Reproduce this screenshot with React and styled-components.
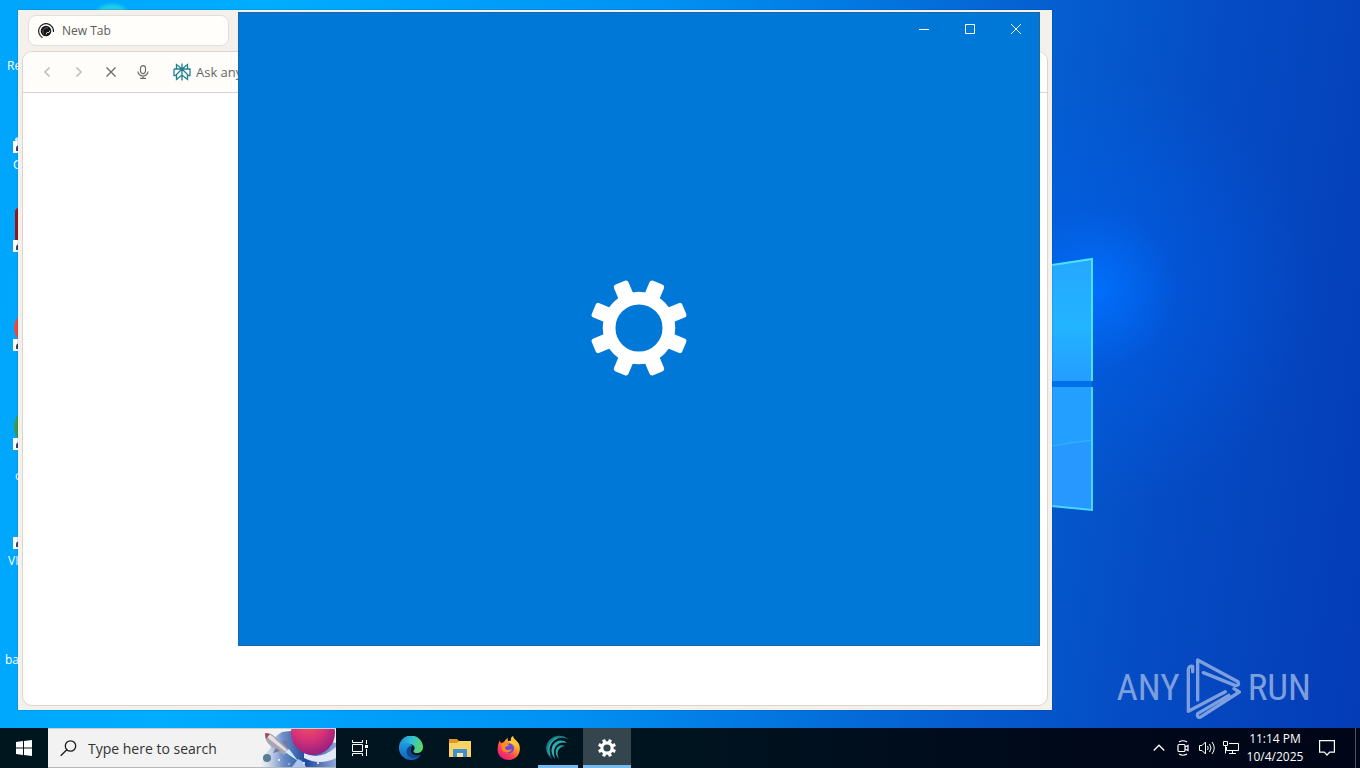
import React from "react";
import styled, { createGlobalStyle } from "styled-components";

const GlobalStyle = createGlobalStyle`
  * {
    box-sizing: border-box;
  }

  body {
    margin: 0;
    font-family: "Open Sans", "Noto Sans", sans-serif;
    font-size: 12px;
    overflow: hidden;
  }

  button, input {
    font: inherit;
    color: inherit;
    border: 0;
    padding: 0;
    background: none;
    outline: none;
  }

  svg {
    display: block;
    flex: none;
  }
`;

const Screen = styled.div`
  display: flex;
  flex-direction: column;
  height: 100vh;
`;

/* desktop */

const Desktop = styled.main`
  position: relative;
  flex: 1;
  overflow: hidden;
  background:
    radial-gradient(ellipse 20px 14px at 112px 16px, #22c9e6 70%, transparent),
    radial-gradient(circle at 1095px 290px, rgba(0, 112, 255, 0.95), rgba(0, 96, 240, 0.4) 80px, transparent 220px),
    linear-gradient(98deg, #00a5fc 0%, #00adff 18%, #0092f4 45%, #0562d2 70%, #054cc4 84%, #043cb6 100%);
`;

const Wallpaper = styled.svg`
  position: absolute;
  left: 979px;
  top: 240px;
`;

const Shortcuts = styled.ul`
  display: flex;
  flex-direction: column;
  width: 75px;
  margin: 0;
  padding: 0;
  list-style: none;
  color: #fff;
`;

const Shortcut = styled.li`
  height: 99px;
  flex: none;
`;

const ShortcutLabel = styled.div`
  padding-left: ${(p) => p.$indent}px;
  padding-top: ${(p) => (p.$second ? 14 : 0)}px;
  line-height: 18px;
`;

const Watermark = styled.div`
  position: absolute;
  right: 49px;
  bottom: 9px;
  display: flex;
  align-items: center;
  gap: 6px;
  color: #7e9fdd;
  font-family: "Liberation Sans Narrow", "Roboto Condensed", "Liberation Sans", sans-serif;
  font-size: 37px;
  line-height: 62px;
`;

/* browser window */

const BrowserWindow = styled.section`
  position: absolute;
  left: 18px;
  top: 10px;
  width: 1034px;
  height: 700px;
  display: flex;
  flex-direction: column;
  padding: 0 4px 4px;
  background: #f4f1ed;
  box-shadow: 0 0 1px rgba(0, 40, 80, 0.7);
`;

const TabStrip = styled.div`
  flex: none;
  height: 41px;
  padding: 5px 6px;
`;

const Tab = styled.button`
  display: flex;
  align-items: center;
  gap: 8px;
  width: 201px;
  height: 31px;
  padding: 0 9px;
  border: 1px solid #e2deda;
  border-radius: 8px;
  background: #fffefb;
  color: #5b5b59;
`;

const Page = styled.div`
  flex: 1;
  overflow: hidden;
  border: 1px solid #ddd5ca;
  border-radius: 10px;
  background: #fff;
`;

const Toolbar = styled.div`
  display: flex;
  align-items: center;
  height: 41px;
  padding-left: 8px;
  border-bottom: 1px solid #d9d6d2;
  background: #fffdfa;
`;

const ToolButton = styled.button`
  display: flex;
  align-items: center;
  justify-content: center;
  width: 32px;
  height: 32px;
  color: ${(p) => (p.disabled ? "#bdbbb8" : "#6b6b69")};
`;

const AddressBar = styled.label`
  display: flex;
  align-items: center;
  flex: 1;
  gap: 5px;
  margin-left: 14px;
`;

const AddressInput = styled.input`
  flex: 1;
  font-size: 13px;

  &::placeholder {
    color: #666664;
    opacity: 1;
  }
`;

/* settings window */

const SettingsWindow = styled.section`
  position: absolute;
  left: 238px;
  top: 12px;
  width: 802px;
  height: 634px;
  display: grid;
  border: 1px solid #1b66a6;
  background: #0078d7;
  color: #fff;
`;

const TitleBar = styled.header`
  grid-area: 1 / 1;
  align-self: start;
  display: flex;
  justify-content: flex-end;
`;

const CaptionButton = styled.button`
  display: flex;
  align-items: center;
  justify-content: center;
  width: 46px;
  height: 32px;
`;

const Splash = styled.div`
  grid-area: 1 / 1;
  place-self: center;
  padding-bottom: 2px;
`;

/* taskbar */

const Taskbar = styled.footer`
  display: flex;
  flex: none;
  height: 40px;
  background: linear-gradient(90deg, #00161f, #001420 50%, #000819 80%, #000617);
  color: #fff;
`;

const StartButton = styled.button`
  display: flex;
  align-items: center;
  justify-content: center;
  width: 48px;
`;

const SearchBox = styled.label`
  display: flex;
  align-items: center;
  width: 288px;
  padding-left: 12px;
  gap: 11px;
  background: #f2f2f2;
  border-top: 1px solid #c9cdcf;
  border-bottom: 1px solid #b4b8ba;
  color: #1a1a1a;
`;

const SearchInput = styled.input`
  flex: 1;
  min-width: 0;
  font-size: 14px;

  &::placeholder {
    color: #333;
    opacity: 1;
  }
`;

const Apps = styled.nav`
  display: flex;
  flex: 1;
  gap: 1px;
  padding-left: 2px;
`;

const AppButton = styled.button`
  display: flex;
  align-items: center;
  justify-content: center;
  width: 48px;
  background: ${(p) => (p.$active ? "#34454e" : "none")};
  border-bottom: 3px solid ${(p) => (p.$active ? "#76b9ed" : "transparent")};
  border-top: 3px solid ${(p) => (p.$active ? "#34454e" : "transparent")};

  ${(p) =>
    p.$running &&
    `background: linear-gradient(#76b9ed, #76b9ed) center bottom / 40px 3px no-repeat border-box;`}
`;

const Tray = styled.div`
  display: flex;
`;

const TrayButton = styled.button`
  display: flex;
  align-items: center;
  justify-content: center;
  width: ${(p) => (p.$wide ? 40 : 24)}px;
`;

const Clock = styled.button`
  width: 64px;
  line-height: 18px;
  text-align: center;
`;

const ShowDesktop = styled.button`
  width: 5px;
  margin-left: 8px;
  border-left: 1px solid #4b5261;
`;

const shortcuts = [
  { label: "Re", indent: 7 },
  { label: "G", indent: 13, badge: true, color: "#d9eefa", top: 38, height: 5 },
  { label: "", indent: 16, badge: true, color: "#9c1418", top: 10, height: 34 },
  { label: "", indent: 16, badge: true, color: "#ec4a41", circle: 31, r: 17 },
  { label: "c", indent: 15, second: true, badge: true, color: "#3b9b4a", circle: 31, r: 20 },
  { label: "VI", indent: 8, badge: true },
  { label: "ba", indent: 5 },
];

const ShortcutIcon = ({ item }) => (
  <svg width="56" height="57" viewBox="0 0 56 57">
    {item.height && <rect x="15" y={item.top} width="34" height={item.height} rx="4" fill={item.color} />}
    {item.circle && <circle cx={item.r + 14} cy={item.circle} r={item.r} fill={item.color} />}
    {item.badge && (
      <>
        <rect x="13" y="42" width="12" height="12" fill="#fff" />
        <path d="M17 52v-3q0-2 4-2" fill="none" stroke="#3b3f66" strokeWidth="2" />
      </>
    )}
  </svg>
);

const CometMark = () => (
  <svg width="16" height="16" viewBox="0 0 16 16" fill="none" stroke="#1d1d1d">
    <circle cx="8" cy="8" r="5.300" fill="#161616" stroke="none" />
    <path d="M4.500 14.600A7.400 7.400 0 1 1 15.400 9" strokeWidth="1.200" />
    <path d="M5.500 11C3.500 7.500 6.500 4 10 5" stroke="#888" strokeWidth=".7" />
    <path d="M8 11.500l1-2 2 0 1-2" stroke="#f5f5f5" strokeWidth=".8" />
  </svg>
);

const AnswerMark = () => (
  <svg width="18" height="18" viewBox="0 0 18 18" fill="none" stroke="#22808f" strokeWidth="1.300">
    <path d="M9 .5v17M3.500 6V1.500L9 6l5.500-4.500V6M1 6h16v6.500h-2.500M3.500 12.500H1V6M9 6l-5.500 5.500v5L9 12l5.500 4.500v-5z" />
  </svg>
);

const Gear = ({ size, hole = 24, tooth = 16 }) => (
  <svg width={size} height={size} viewBox="-50 -50 100 100" fill="#fff">
    {[0, 1, 2, 3, 4, 5, 6, 7].map((i) => (
      <rect key={i} x={-tooth / 2} y="-50" width={tooth} height="20" rx="3" transform={`rotate(${22.5 + i * 45})`} />
    ))}
    <circle r={(37 + hole) / 2} fill="none" stroke="#fff" strokeWidth={37 - hole} />
  </svg>
);

const SearchArt = () => (
  <svg width="76" height="38" viewBox="0 0 76 38">
    <defs>
      <radialGradient id="planet" cx=".4" cy=".25" r=".8">
        <stop offset="0" stopColor="#f4585c" />
        <stop offset=".5" stopColor="#d93277" />
        <stop offset="1" stopColor="#8c1d80" />
      </radialGradient>
      <linearGradient id="space" x1="0" x2="1">
        <stop offset="0" stopColor="#aebfe0" stopOpacity="0" />
        <stop offset=".3" stopColor="#6e8fc9" />
        <stop offset=".6" stopColor="#1f4a9c" />
        <stop offset="1" stopColor="#8fa8d8" />
      </linearGradient>
    </defs>
    <path d="M0 38Q3 25 10 20q2-12 12-17l25-3 20 12 9 2v24z" fill="url(#space)" />
    <path d="M44 24q16 8 32-6v11q-16 8-32 0z" fill="#e3e8f6" />
    <path d="M38 30q6 2 8 8H32z" fill="#a9c4f0" />
    <circle cx="53" cy="4" r="22" fill="url(#planet)" />
    <circle cx="7" cy="29" r="4" fill="#587c94" />
    <path d="M5 4q7-1 12 6l12 11-5 5-12-8Q4 12 5 4z" fill="#a6a5b5" />
    <path d="M6 5q6 0 10 6l11 10-2 1L13 13Q7 9 6 5z" fill="#e8dfe2" />
    <path d="M5 4l5 1-4 5z" fill="#a54a58" />
    <path d="M16 19l-3 5 7-2M22 12l5 0 3 7" fill="#77768e" />
    <path d="M25 23l4-3 9 12z" fill="#c9eeff" />
    <g fill="#fff">
      <circle cx="19" cy="31" r="1" />
      <circle cx="44" cy="34" r="1" />
      <circle cx="58" cy="34" r="1" />
      <circle cx="29" cy="35" r=".7" />
    </g>
  </svg>
);

const EdgeIcon = () => (
  <svg width="24" height="24" viewBox="0 0 24 24">
    <defs>
      <linearGradient id="edgeTop" x1="0" y1=".3" x2="1" y2=".5">
        <stop offset="0" stopColor="#2389dc" />
        <stop offset=".5" stopColor="#2fc2d5" />
        <stop offset="1" stopColor="#62d75d" />
      </linearGradient>
      <linearGradient id="edgeLow" x1="0" y1="0" x2="0" y2="1">
        <stop offset="0" stopColor="#1b9de2" />
        <stop offset="1" stopColor="#1461b8" />
      </linearGradient>
    </defs>
    <path d="M0 12a12 12 0 0 1 24-1c0 4-3 6-6 6-4 0-4-2-3-3 2-3-1-6-5-6-5 0-9 3-10 7z" fill="url(#edgeTop)" />
    <path d="M0 12c0-4 5-6 9-5 3 1 4 2 4 3-6 1-6 9 2 11 3 1 6-1 7-2-2 3-6 5-10 5A12 12 0 0 1 0 12z" fill="url(#edgeLow)" />
    <path d="M8 13c-2 6 3 10 8 9 3-.5 5-2 6-4-4 3-10 1-10-4 0-2 1-3 1-4-3 0-4 1-5 3z" fill="#11468d" />
  </svg>
);

const ExplorerIcon = () => (
  <svg width="22" height="18" viewBox="0 0 22 18">
    <path d="M0 0h8l2 2h12v4H0z" fill="#dc9a25" />
    <path d="M0 4h8l2-2h12v16H0z" fill="#fbd363" />
    <path d="M4 10h14v8h-4v-4H8v4H4z" fill="#3e91d0" />
    <path d="M8 14h6v4H8z" fill="#fbe4a0" />
  </svg>
);

const FirefoxIcon = () => (
  <svg width="24" height="24" viewBox="0 0 24 24">
    <defs>
      <linearGradient id="fox" x1=".9" y1="0" x2=".2" y2="1">
        <stop offset="0" stopColor="#fff044" />
        <stop offset=".4" stopColor="#ff9a29" />
        <stop offset=".7" stopColor="#ff4052" />
        <stop offset="1" stopColor="#e31587" />
      </linearGradient>
    </defs>
    <path d="M3 4c0 1 0 2 1 3l3-1c1-2 2-3 4-4-.5 1-.3 2 0 3h3c-.5-2 0-4 2-5 1 4 4 4 6 8 3 8-2 16-10 16S-1 18 1 10c0-2 1-4 2-6z" fill="url(#fox)" />
    <circle cx="12" cy="12.500" r="5" fill="#7047dc" />
    <path d="M4 8c3-2 6-1 8 1-1 2-4 1-4 3s4 3 7 1c-2 5-9 4-10 0z" fill="#ff8a24" />
    <path d="M12 5c4-1 7 2 8 7-1-2-2-3-4-4-1-1-3-1-4-3z" fill="#ffd43a" />
  </svg>
);

const CometIcon = () => (
  <svg width="26" height="26" viewBox="0 0 26 26">
    <path d="M24 5C19-1 8-1 3 7c-4 7-1 13 4 17C3 17 4 10 9 6c5-4 10-4 15-1z" fill="#1b7f8a" />
    <path d="M22 8C18 4 11 5 8 10c-3 5-1 10 2 14-1-5-2-9 1-13 3-4 7-4 11-3z" fill="#2bb1ae" />
    <path d="M20 11c-4-2-8 0-9 4-1 3 0 6 3 9-2-4-2-7 0-10 2-2 4-3 6-3z" fill="#27a5a5" />
    <path d="M5 20C2 13 5 6 12 3" fill="none" stroke="#49c9c4" strokeWidth=".8" />
  </svg>
);

const PlayMark = () => (
  <svg width="56" height="62" viewBox="270 51 168 186" fill="none" stroke="#7e9fdd" strokeWidth="10" strokeLinejoin="round" strokeLinecap="round">
    <path d="M305 180V60L426 125Q431 137 419 137L322 98" />
    <path d="M290 95V79Q277 77 277 90V214L388 155" />
    <path d="M414 146L430 156L312 232Q302 233 305 221L398 166" />
  </svg>
);

const App = () => {
  return (
    <Screen>
      <GlobalStyle />
      <Desktop>
        <Wallpaper width="130" height="290" viewBox="0 0 130 290">
          <defs>
            <linearGradient id="pane" x1="0" y1="0" x2="0" y2="1">
              <stop offset="0" stopColor="#25a8ff" />
              <stop offset=".55" stopColor="#22b4ff" />
              <stop offset="1" stopColor="#249cff" />
            </linearGradient>
          </defs>
          <path d="M0 36L113 19V141H0z" fill="url(#pane)" />
          <path d="M0 36L113 19V141" fill="none" stroke="#4ce2fc" strokeWidth="2" />
          <path d="M0 141h113v6H0z" fill="#0070e8" />
          <path d="M0 147h113v123L0 259z" fill="#2698ff" />
          <path d="M0 147h113v54L0 215z" fill="#239fff" />
          <path d="M72 206l41-6" stroke="#30b9f6" strokeWidth="1" />
          <path d="M113 147v123L0 259" fill="none" stroke="#4ad8f8" strokeWidth="2" />
        </Wallpaper>
        <Shortcuts>
          {shortcuts.map((item, i) => (
            <Shortcut key={i}>
              <ShortcutIcon item={item} />
              <ShortcutLabel $indent={item.indent} $second={item.second}>
                {item.label}
              </ShortcutLabel>
            </Shortcut>
          ))}
        </Shortcuts>
        <Watermark>
          <span>ANY</span>
          <PlayMark />
          <span>RUN</span>
        </Watermark>

        <BrowserWindow>
          <TabStrip>
            <Tab>
              <CometMark />
              New Tab
            </Tab>
          </TabStrip>
          <Page>
            <Toolbar>
              <ToolButton disabled aria-label="Back">
                <svg width="8" height="10" viewBox="0 0 8 10" fill="none" stroke="currentColor" strokeWidth="1.500">
                  <path d="M6.500.500L2 5l4.500 4.500" />
                </svg>
              </ToolButton>
              <ToolButton disabled aria-label="Forward">
                <svg width="8" height="10" viewBox="0 0 8 10" fill="none" stroke="currentColor" strokeWidth="1.500">
                  <path d="M1.500.500L6 5 1.500 9.500" />
                </svg>
              </ToolButton>
              <ToolButton aria-label="Stop">
                <svg width="10" height="10" viewBox="0 0 10 10" stroke="currentColor" strokeWidth="1.300">
                  <path d="M.5.500l9 9M9.500.500l-9 9" />
                </svg>
              </ToolButton>
              <ToolButton aria-label="Voice">
                <svg width="12" height="14" viewBox="0 0 12 14" fill="none" stroke="currentColor" strokeWidth="1.200">
                  <rect x="3.500" y=".6" width="5" height="8" rx="2.500" />
                  <path d="M1 6.500a5 4.500 0 0 0 10 0M6 11v2.500M3 13.400h6" />
                </svg>
              </ToolButton>
              <AddressBar>
                <AnswerMark />
                <AddressInput placeholder="Ask any" aria-label="Address" />
              </AddressBar>
            </Toolbar>
          </Page>
        </BrowserWindow>

        <SettingsWindow>
          <TitleBar>
            <CaptionButton aria-label="Minimize">
              <svg width="10" height="10" viewBox="0 0 10 10" stroke="#fff">
                <path d="M0 5.500h10" />
              </svg>
            </CaptionButton>
            <CaptionButton aria-label="Maximize">
              <svg width="10" height="10" viewBox="0 0 10 10" fill="none" stroke="#fff">
                <path d="M.5.500h9v9h-9z" />
              </svg>
            </CaptionButton>
            <CaptionButton aria-label="Close">
              <svg width="10" height="10" viewBox="0 0 10 10" stroke="#fff">
                <path d="M0 0l10 10M10 0L0 10" />
              </svg>
            </CaptionButton>
          </TitleBar>
          <Splash>
            <Gear size={98} />
          </Splash>
        </SettingsWindow>
      </Desktop>

      <Taskbar>
        <StartButton aria-label="Start">
          <svg width="16" height="16" viewBox="0 0 16 16" fill="#fff">
            <path d="M0 2l7-1v6.500H0zM8 1l8-1v7.500H8zM0 8.500h7V15l-7-1zM8 8.500h8V16l-8-1z" />
          </svg>
        </StartButton>
        <SearchBox>
          <svg width="17" height="17" viewBox="0 0 17 17" fill="none" stroke="currentColor" strokeWidth="1.300">
            <circle cx="10.500" cy="6" r="5.200" />
            <path d="M6.800 9.700L.7 15.800" />
          </svg>
          <SearchInput placeholder="Type here to search" aria-label="Search" />
          <SearchArt />
        </SearchBox>
        <Apps>
          <AppButton aria-label="Task view">
            <svg width="20" height="16" viewBox="0 0 20 16" fill="none" stroke="#fff">
              <path d="M.5 0v2.500h10V0M.5 4.500h10v7H.5zM.5 16v-2.500h10V16M14.500 0v4M14.500 9v7" />
              <path d="M13 5h3v3h-3z" fill="#fff" stroke="none" />
            </svg>
          </AppButton>
          <AppButton aria-label="Microsoft Edge">
            <EdgeIcon />
          </AppButton>
          <AppButton aria-label="File Explorer">
            <ExplorerIcon />
          </AppButton>
          <AppButton aria-label="Firefox">
            <FirefoxIcon />
          </AppButton>
          <AppButton $running aria-label="Comet">
            <CometIcon />
          </AppButton>
          <AppButton $active aria-label="Settings">
            <Gear size={18} hole={20} tooth={18} />
          </AppButton>
        </Apps>
        <Tray>
          <TrayButton aria-label="Show hidden icons">
            <svg width="12" height="8" viewBox="0 0 12 8" fill="none" stroke="#fff" strokeWidth="1.300">
              <path d="M.7 6.500L6 1.200l5.300 5.300" />
            </svg>
          </TrayButton>
          <TrayButton aria-label="Camera">
            <svg width="12" height="16" viewBox="0 0 12 16" fill="none" stroke="#fff" strokeWidth="1.200">
              <rect x="1" y="4.500" width="7" height="7" rx="1" />
              <path d="M8 7l3-1.500v5L8 9M2 2q4-2.500 8 0M2 14q4 2.500 8 0" />
            </svg>
          </TrayButton>
          <TrayButton aria-label="Volume">
            <svg width="17" height="14" viewBox="0 0 17 14" fill="none" stroke="#fff">
              <path d="M.5 4.500H3l3.500-3.500v12L3 9.500H.5z" />
              <path d="M8.500 5q1.500 2 0 4M10.500 3q3 4 0 8M13 1q4.500 6 0 12" />
            </svg>
          </TrayButton>
          <TrayButton aria-label="Network">
            <svg width="16" height="14" viewBox="0 0 16 14" fill="none" stroke="#fff">
              <path d="M6 2.500h9.500v7h-12V6M9.500 9.500v3M6 12.500h7" />
              <path d="M.5.500h4v4h-4zM2.500 4.500v8" />
            </svg>
          </TrayButton>
          <Clock>
            11:14 PM
            <br />
            10/4/2025
          </Clock>
          <TrayButton $wide aria-label="Notifications">
            <svg width="16" height="16" viewBox="0 0 16 16" fill="none" stroke="#fff" strokeWidth="1.200">
              <path d="M.6.600h14.800v11.500h-4.700L8 15l-2.700-2.900H.6z" />
            </svg>
          </TrayButton>
          <ShowDesktop aria-label="Show desktop" />
        </Tray>
      </Taskbar>
    </Screen>
  );
};

export default App;
